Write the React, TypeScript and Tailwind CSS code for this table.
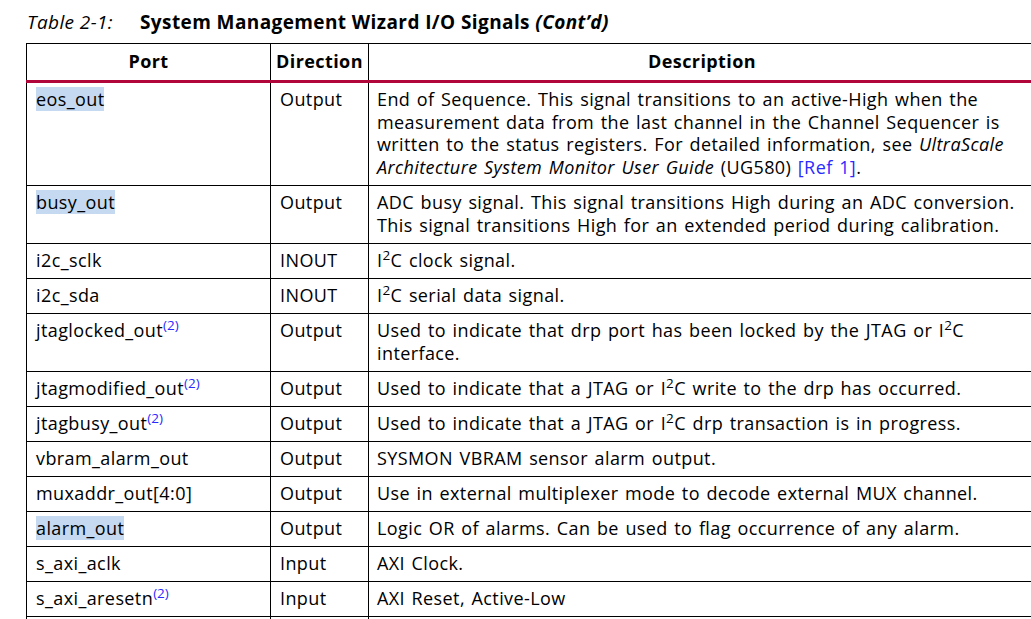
import React from "react";

const font = { fontFamily: '"Open Sans", "Noto Sans", sans-serif' };

const Sup = ({ children }: { children: React.ReactNode }) => (
  <sup className="text-[13.5px] text-[#2a2aff] relative -top-[7px] align-baseline tracking-normal">
    {children}
  </sup>
);

const I2C = () => (
  <>
    I<sup className="text-[13.5px] relative -top-[7px] align-baseline">2</sup>C
  </>
);

const Hl = ({ children }: { children: React.ReactNode }) => (
  <span className="bg-[#c5d9f1]">{children}</span>
);

type Row = { port: React.ReactNode; dir: string; desc: React.ReactNode };

const rows: Row[] = [
  {
    port: <Hl>eos_out</Hl>,
    dir: "Output",
    desc: (
      <>
        End of Sequence. This signal transitions to an active-High when the
        <br />
        measurement data from the last channel in the Channel Sequencer is
        <br />
        written to the status registers. For detailed information, see <i>UltraScale</i>
        <br />
        <i>Architecture System Monitor User Guide</i> (UG580){" "}
        <span className="text-[#2a2aff]">[Ref 1]</span>.
      </>
    ),
  },
  {
    port: <Hl>busy_out</Hl>,
    dir: "Output",
    desc: (
      <>
        ADC busy signal. This signal transitions High during an ADC conversion.
        <br />
        This signal transitions High for an extended period during calibration.
      </>
    ),
  },
  { port: "i2c_sclk", dir: "INOUT", desc: <><I2C /> clock signal.</> },
  { port: "i2c_sda", dir: "INOUT", desc: <><I2C /> serial data signal.</> },
  {
    port: <>jtaglocked_out<Sup>(2)</Sup></>,
    dir: "Output",
    desc: (
      <>
        Used to indicate that drp port has been locked by the JTAG or <I2C />
        <br />
        interface.
      </>
    ),
  },
  {
    port: <>jtagmodified_out<Sup>(2)</Sup></>,
    dir: "Output",
    desc: <>Used to indicate that a JTAG or <I2C /> write to the drp has occurred.</>,
  },
  {
    port: <>jtagbusy_out<Sup>(2)</Sup></>,
    dir: "Output",
    desc: <>Used to indicate that a JTAG or <I2C /> drp transaction is in progress.</>,
  },
  { port: "vbram_alarm_out", dir: "Output", desc: "SYSMON VBRAM sensor alarm output." },
  {
    port: "muxaddr_out[4:0]",
    dir: "Output",
    desc: "Use in external multiplexer mode to decode external MUX channel.",
  },
  {
    port: <Hl>alarm_out</Hl>,
    dir: "Output",
    desc: "Logic OR of alarms. Can be used to flag occurrence of any alarm.",
  },
  { port: "s_axi_aclk", dir: "Input", desc: "AXI Clock." },
  { port: <>s_axi_aresetn<Sup>(2)</Sup></>, dir: "Input", desc: "AXI Reset, Active-Low" },
  { port: "", dir: "", desc: "" },
];

const th =
  "border border-black border-b-[3px] border-b-[#b0063a] font-bold text-center align-middle pb-[1px]";
const td = "border border-black align-top pt-[5px] pb-[6.3px] whitespace-nowrap";

export default function App() {
  return (
    <div className="w-[1031px] h-[619px] overflow-hidden bg-white text-black" style={font}>
      <div className="pl-[27px] pt-[10px] h-[43px] text-[19px] leading-[24px] tracking-[0.4px] flex">
        <span className="italic w-[113px]">Table 2-1:</span>
        <span className="font-bold">
          System Management Wizard I/O Signals <i>(Cont’d)</i>
        </span>
      </div>
      <table className="ml-[26px] w-[1010px] border-collapse table-fixed text-[18px] leading-[22.7px] tracking-[0.4px] [word-spacing:1.5px]">
        <colgroup>
          <col className="w-[244px]" />
          <col className="w-[98px]" />
          <col />
        </colgroup>
        <thead>
          <tr className="h-[38px]">
            <th className={th}>Port</th>
            <th className={th}>Direction</th>
            <th className={th}>Description</th>
          </tr>
        </thead>
        <tbody>
          {rows.map((r, i) => (
            <tr key={i}>
              <td className={`${td} pl-[9px]`}>{r.port}</td>
              <td className={`${td} pl-[9px]`}>{r.dir}</td>
              <td className={`${td} pl-[8px]`}>{r.desc}</td>
            </tr>
          ))}
        </tbody>
      </table>
    </div>
  );
}
